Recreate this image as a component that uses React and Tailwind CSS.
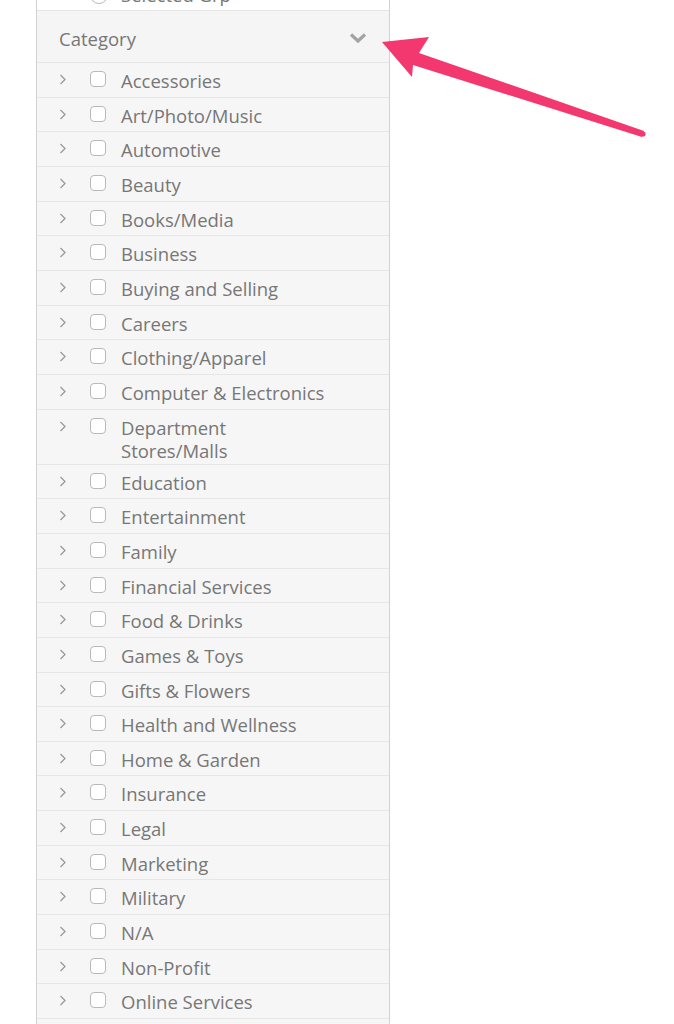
import React from 'react';

const categories = [
  'Accessories',
  'Art/Photo/Music',
  'Automotive',
  'Beauty',
  'Books/Media',
  'Business',
  'Buying and Selling',
  'Careers',
  'Clothing/Apparel',
  'Computer & Electronics',
  'Department Stores/Malls',
  'Education',
  'Entertainment',
  'Family',
  'Financial Services',
  'Food & Drinks',
  'Games & Toys',
  'Gifts & Flowers',
  'Health and Wellness',
  'Home & Garden',
  'Insurance',
  'Legal',
  'Marketing',
  'Military',
  'N/A',
  'Non-Profit',
  'Online Services',
  'Other Products',
];

const CategoryRow = ({ label }) => (
  <div className="flex items-start pt-[6px] pb-[2px] min-h-[34.66px] border-b border-[#e6e6e6] bg-[#f6f6f6]">
    <div className="w-[22px] shrink-0" />
    <svg className="mt-[5px] shrink-0" width="8" height="11" viewBox="0 0 8 11" fill="none">
      <path d="M1.5 1 L6 5.5 L1.5 10" stroke="#9a9a9a" strokeWidth="1.3" />
    </svg>
    <div className="w-[23px] shrink-0" />
    <div className="mt-[2px] w-[16px] h-[16px] shrink-0 rounded-[4px] border border-[#b9b9b9] bg-white" />
    <div className="w-[15px] shrink-0" />
    <span className="text-[18.5px] leading-[23px] text-[#777777] w-[212px]">{label}</span>
  </div>
);

const App = () => {
  return (
    <div
      className="relative w-[674px] h-[1024px] overflow-hidden bg-white"
      style={{ fontFamily: '"Open Sans", "Liberation Sans", sans-serif' }}
    >
      <div className="ml-[36px] w-[354px] border-x border-[#d2d2d2]">
        {/* previous section, scrolled off */}
        <div className="h-[10px] overflow-hidden bg-white">
          <div className="-mt-[17px] flex items-center pl-[53px]">
            <div className="w-[18px] h-[18px] rounded-full border border-[#b9b9b9]" />
            <span className="ml-[13px] text-[18.5px] leading-[23px] text-[#777777]">Selected Grp</span>
          </div>
        </div>

        <div className="h-[53px] flex items-center justify-between pl-[22px] pr-[22px] pt-[3px] border-y border-[#e6e6e6] bg-[#f5f5f5]">
          <span className="text-[18.5px] leading-[23px] text-[#777777]">Category</span>
          <svg width="18" height="12" viewBox="0 0 18 12" fill="none">
            <path d="M2 2.5 L9 9 L16 2.5" stroke="#a3a3a3" strokeWidth="3.2" />
          </svg>
        </div>

        {categories.map((c) => (
          <CategoryRow key={c} label={c} />
        ))}
      </div>

      {/* annotation arrow */}
      <svg className="absolute left-0 top-0 pointer-events-none" width="674" height="1024" viewBox="0 0 674 1024">
        <polygon points="382,42 429,37 419,53 644,131 642,137 413,65 412,77" fill="#f2386e" />
        <circle cx="643" cy="134" r="2.6" fill="#f2386e" />
      </svg>
    </div>
  );
};

export default App;
